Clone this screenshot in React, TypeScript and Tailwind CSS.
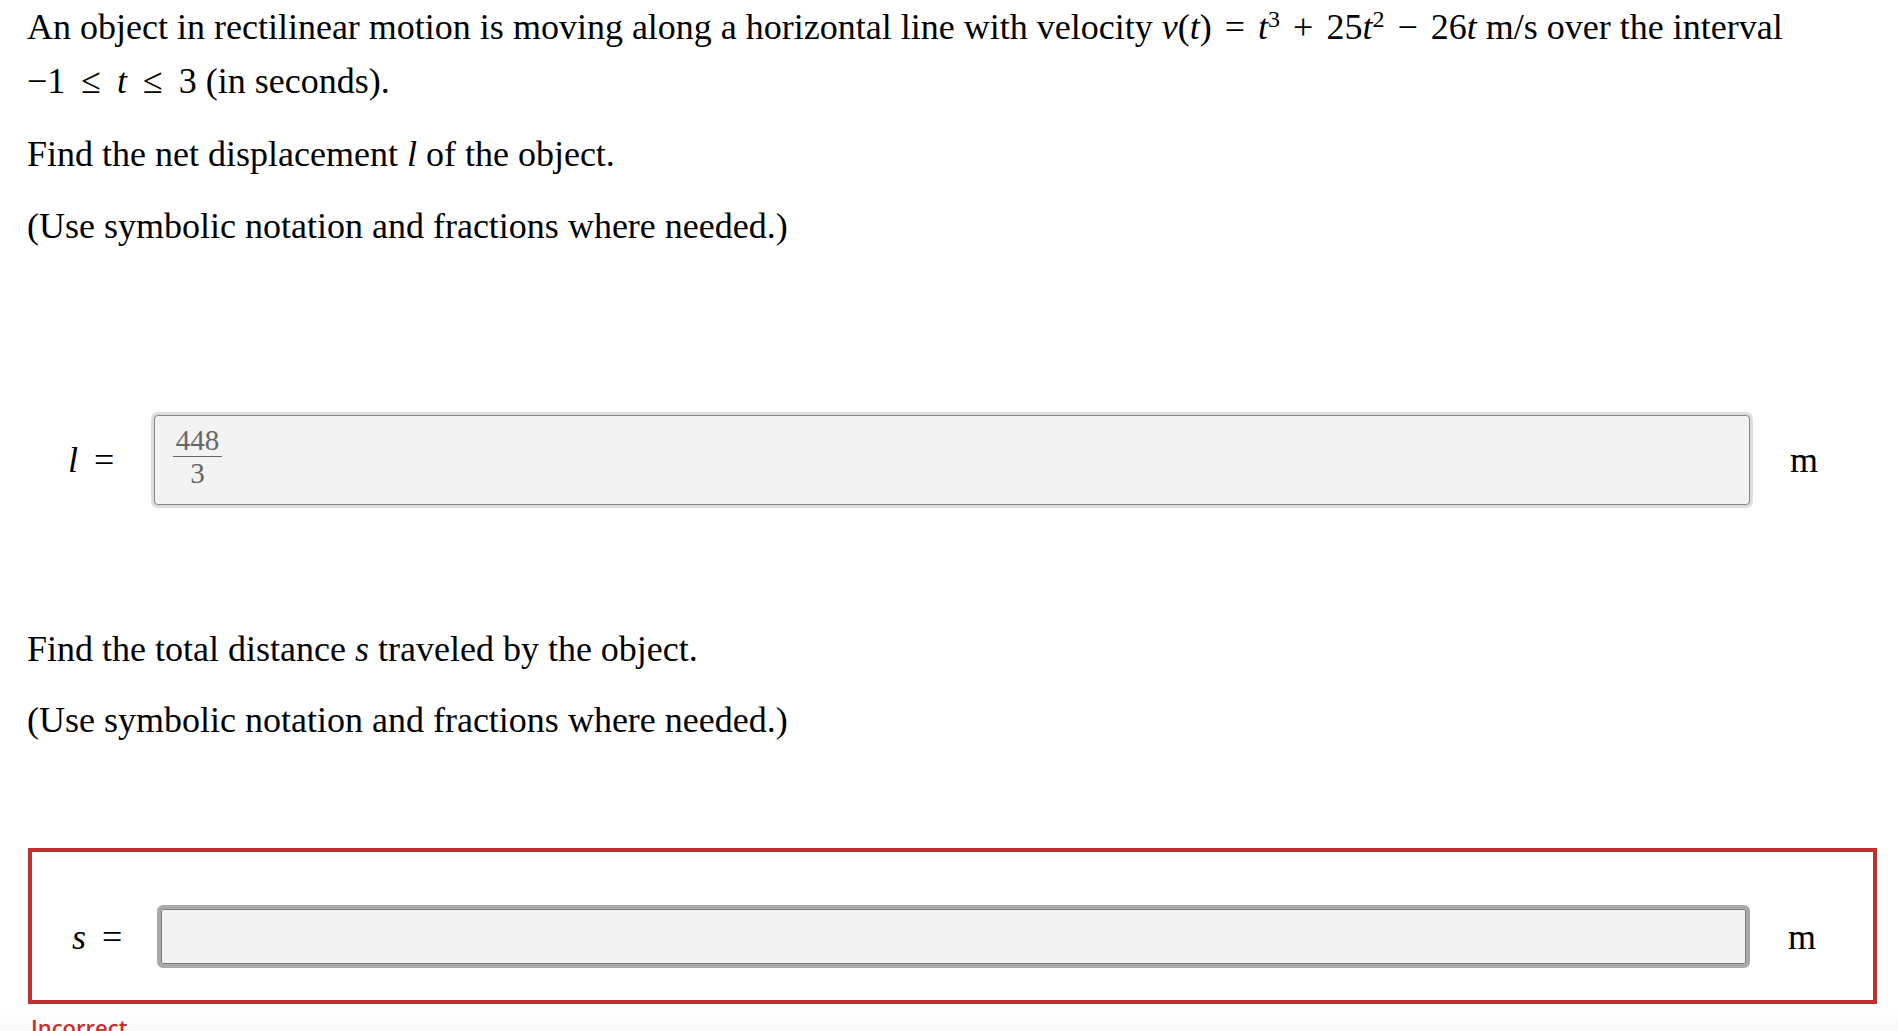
function Op({ c, w = "mx-[13px]" }: { c: string; w?: string }) {
  return <span className={w}>{c}</span>;
}

export default function App() {
  const serif = { fontFamily: '"Liberation Serif", "Times New Roman", serif' };
  return (
    <div className="h-[1031px] w-[1898px] overflow-hidden bg-white text-black" style={serif}>
      <div className="pl-[27px] pr-[21px] text-[36px]">
        <p className="leading-[54px]">
          An object in rectilinear motion is moving along a horizontal line with velocity{" "}
          <i>v</i>(<i>t</i>)<Op c="=" />
          <i>t</i>
          <sup className="text-[24px]">3</sup>
          <Op c="+" />
          25<i>t</i>
          <sup className="text-[24px]">2</sup>
          <Op c="−" />
          26<i>t</i> m/s over the interval
          <br />
          −1<Op c="≤" w="mx-[16px]" />
          <i>t</i>
          <Op c="≤" w="mx-[16px]" />3 (in seconds).
        </p>
        <p className="mt-[19px] leading-[54px]">
          Find the net displacement <i>l</i> of the object.
        </p>
        <p className="mt-[18px] leading-[54px]">(Use symbolic notation and fractions where needed.)</p>
      </div>

      <div className="ml-[28px] mr-[21px] mt-[162px] flex items-center pl-[40px]">
        <div className="w-[86px] text-[36px]">
          <i>l</i>
          <span className="ml-[16px]">=</span>
        </div>
        <div className="flex h-[90px] flex-1 items-start rounded-[4px] border border-[#858585] bg-[#f3f3f3] pl-[18px] pt-[9px] shadow-[0_0_0_3px_#dddddd]">
          <div className="flex flex-col items-center text-[29px] leading-[31px] text-[#666666]">
            <span className="px-[2px]">448</span>
            <span className="h-px w-[49px] bg-[#666666]" />
            <span className="pt-[1px]">3</span>
          </div>
        </div>
        <div className="w-[127px] pl-[40px] text-[36px]">m</div>
      </div>

      <div className="pl-[27px] text-[36px]">
        <p className="mt-[117px] leading-[54px]">
          Find the total distance <i>s</i> traveled by the object.
        </p>
        <p className="mt-[17px] leading-[54px]">(Use symbolic notation and fractions where needed.)</p>
      </div>

      <div className="ml-[28px] mr-[21px] mt-[101px] border-[4px] border-[#c22f2f] pb-[32px] pl-[40px] pt-[53px]">
        <div className="flex items-center">
          <div className="w-[85px] text-[36px]">
            <i>s</i>
            <span className="ml-[16px]">=</span>
          </div>
          <div className="h-[63px] flex-1 rounded-[6px] border-[4px] border-[#a9a9a9] bg-[#f3f3f3] shadow-[inset_0_0_0_1px_#7c7c7c]" />
          <div className="w-[123px] pl-[38px] text-[36px]">m</div>
        </div>
      </div>

      <div className="h-[40px] bg-gradient-to-b from-white to-[#f6f6f6] pl-[31px] pt-[9px]">
        <span
          className="text-[22px] font-semibold leading-[28px] text-[#c22f2f]"
          style={{ fontFamily: '"Open Sans", "Liberation Sans", sans-serif' }}
        >
          Incorrect
        </span>
      </div>
    </div>
  );
}
